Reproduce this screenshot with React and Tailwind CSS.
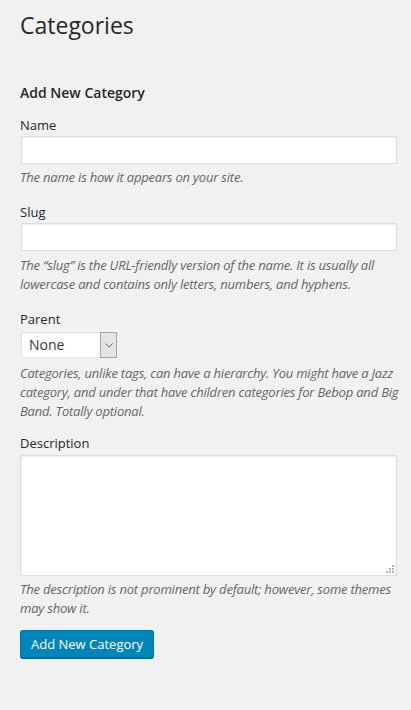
import React from 'react';

const font = { fontFamily: '"Open Sans", "Noto Sans", "Liberation Sans", sans-serif' };

const inputCls =
  'block w-[376px] h-[28px] bg-white border border-[#dddddd] shadow-[inset_0_1px_2px_rgba(0,0,0,0.07)] px-2 text-[14px] text-[#32373c] outline-none';

const Help = ({ children, className = '' }) => (
  <p className={`text-[13px] leading-[19px] italic tracking-[-0.2px] text-[#666666] ${className}`}>{children}</p>
);

const Label = ({ children, htmlFor }) => (
  <label htmlFor={htmlFor} className="block text-[13px] leading-[19px] text-[#23282d]">
    {children}
  </label>
);

const ResizeGrip = () => (
  <svg className="absolute right-[3px] bottom-[3px]" width="8" height="8" viewBox="0 0 8 8">
    {[[6, 0], [6, 3], [3, 3], [6, 6], [3, 6], [0, 6]].map(([x, y], i) => (
      <rect key={i} x={x} y={y} width="2" height="2" fill="#b4b4b4" />
    ))}
  </svg>
);

export default function App() {
  return (
    <div className="min-h-[710px] bg-[#f1f1f1] text-[#23282d]" style={font}>
      <div className="pl-[20px] pr-[11px] pt-[11px] pb-[50px]">
        <h1 className="text-[23px] leading-[29px] font-normal text-[#23282d]">Categories</h1>

        <h2 className="mt-[43px] text-[14px] leading-[19px] font-semibold">Add New Category</h2>

        <div className="mt-[14px]">
          <Label htmlFor="tag-name">Name</Label>
          <input id="tag-name" type="text" className={`${inputCls} mt-[1px] ml-[1px]`} />
          <Help className="mt-[4px]">The name is how it appears on your site.</Help>
        </div>

        <div className="mt-[16px]">
          <Label htmlFor="tag-slug">Slug</Label>
          <input id="tag-slug" type="text" className={`${inputCls} mt-[1px] ml-[1px]`} />
          <Help className="mt-[5px]">
            The “slug” is the URL-friendly version of the name. It is usually all lowercase and contains only
            letters, numbers, and hyphens.
          </Help>
        </div>

        <div className="mt-[16px]">
          <Label htmlFor="parent">Parent</Label>
          <div className="mt-[3px] ml-[1px] flex w-[96px] h-[26px] bg-white border border-[#e3e3e3] shadow-[inset_0_1px_2px_rgba(0,0,0,0.04)]">
            <span className="flex-1 pl-[7px] text-[14px] leading-[24px] text-[#32373c]">None</span>
            <span className="flex w-[17px] items-center justify-center bg-[#e4e4e4] border border-[#a6a6a6] -my-px -mr-px">
              <svg width="8" height="5" viewBox="0 0 8 5" fill="none">
                <path d="M0.5 0.5L4 4L7.5 0.5" stroke="#666666" strokeWidth="1" />
              </svg>
            </span>
          </div>
          <Help className="mt-[6px]">
            Categories, unlike tags, can have a hierarchy. You might have a Jazz category, and under that have
            children categories for Bebop and Big Band. Totally optional.
          </Help>
        </div>

        <div className="mt-[13px]">
          <Label htmlFor="tag-description">Description</Label>
          <div className="relative mt-[2px] w-[377px]">
            <textarea
              id="tag-description"
              className="block w-[377px] h-[121px] resize-none bg-white border border-[#dddddd] shadow-[inset_0_1px_2px_rgba(0,0,0,0.07)] outline-none"
            />
            <ResizeGrip />
          </div>
          <Help className="mt-[4px]">
            The description is not prominent by default; however, some themes may show it.
          </Help>
        </div>

        <button
          type="button"
          className="mt-[12px] h-[28px] px-[10px] rounded-[3px] bg-[#0085ba] border border-[#0073aa] border-b-[#006799] shadow-[0_1px_0_#006799] text-[13px] leading-[26px] text-white"
        >
          Add New Category
        </button>
      </div>
    </div>
  );
}
